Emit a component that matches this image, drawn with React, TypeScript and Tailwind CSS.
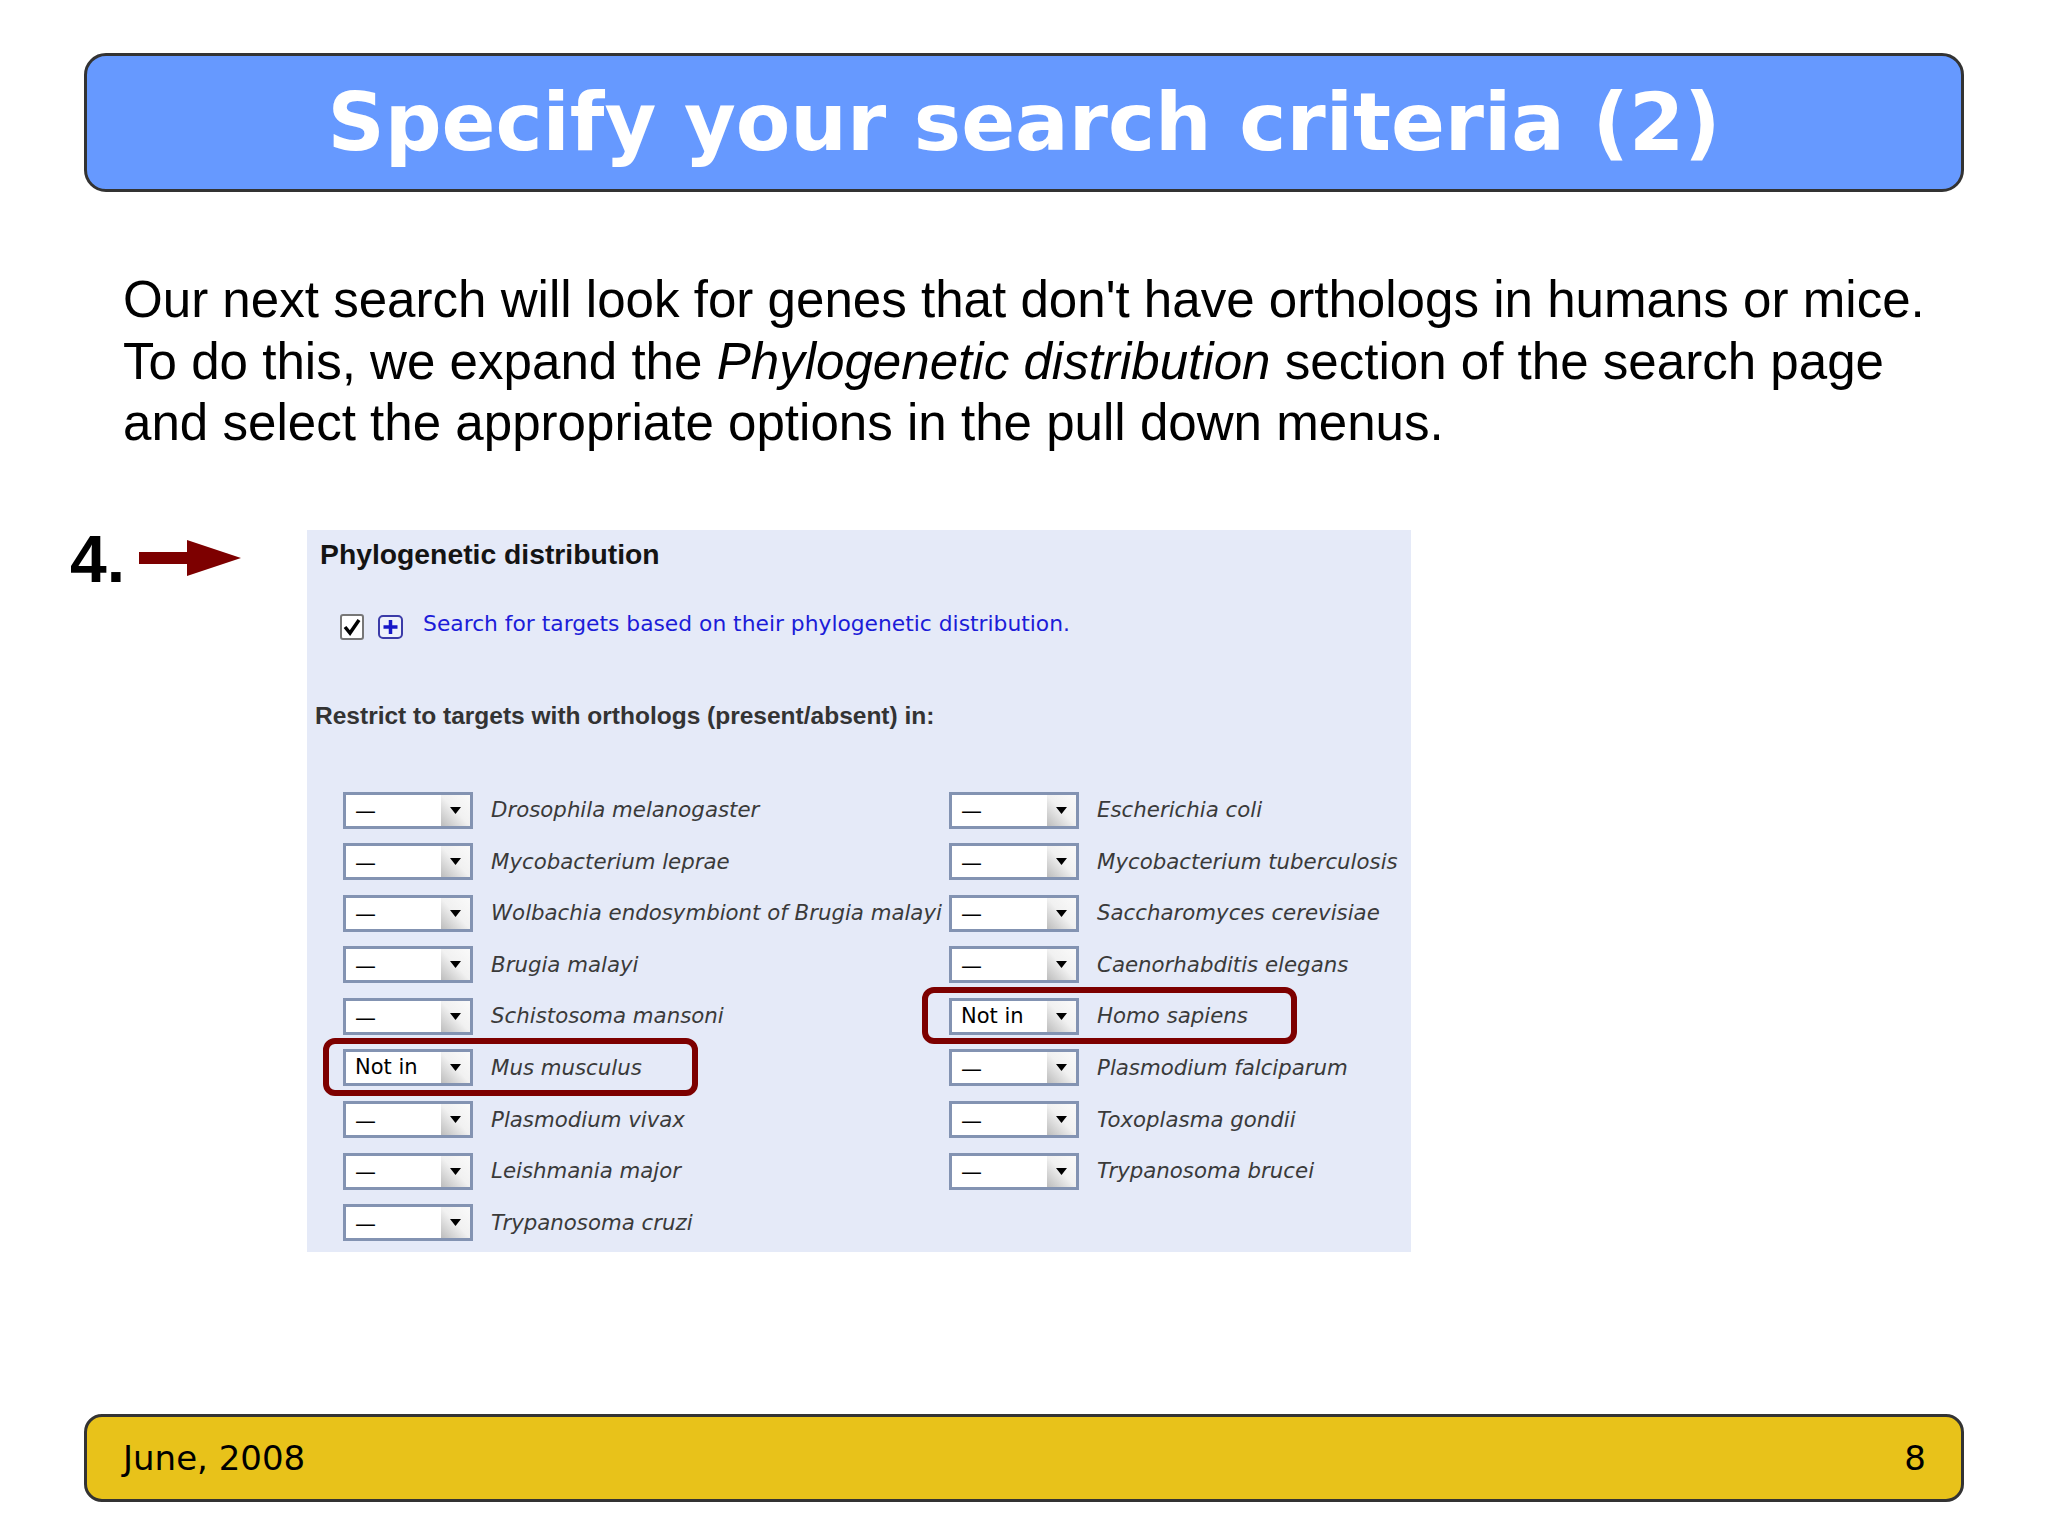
import React from "react";

interface Organism {
  name: string;
  notIn?: boolean;
  boxLeft?: string;
}

const LEFT_COL: Organism[] = [
  { name: "Drosophila melanogaster" },
  { name: "Mycobacterium leprae" },
  { name: "Wolbachia endosymbiont of Brugia malayi" },
  { name: "Brugia malayi" },
  { name: "Schistosoma mansoni" },
  { name: "Mus musculus", notIn: true, boxLeft: "left" },
  { name: "Plasmodium vivax" },
  { name: "Leishmania major" },
  { name: "Trypanosoma cruzi" },
];

const RIGHT_COL: Organism[] = [
  { name: "Escherichia coli" },
  { name: "Mycobacterium tuberculosis" },
  { name: "Saccharomyces cerevisiae" },
  { name: "Caenorhabditis elegans" },
  { name: "Homo sapiens", notIn: true, boxLeft: "right" },
  { name: "Plasmodium falciparum" },
  { name: "Toxoplasma gondii" },
  { name: "Trypanosoma brucei" },
];

function Select({ notIn }: { notIn?: boolean }) {
  return (
    <div className="flex h-[37px] w-[130px] shrink-0 border-[3px] border-[#8393b2] bg-white">
      <div
        className="flex flex-1 items-center pl-[9px] text-[21px] text-black"
        style={{ fontFamily: '"DejaVu Sans", sans-serif' }}
      >
        {notIn ? "Not in" : <span className="mt-[4px]">—</span>}
      </div>
      <div className="flex w-[29px] items-center justify-center bg-gradient-to-tr from-[#bdbdbd] via-[#f1f1f1] to-[#fafafa]">
        <svg width="11" height="7" viewBox="0 0 11 7">
          <polygon points="0,0 11,0 5.5,7" fill="#000" />
        </svg>
      </div>
    </div>
  );
}

function OrganismRow({ item }: { item: Organism }) {
  return (
    <div className="relative flex h-[37px] items-center">
      {item.boxLeft && (
        <div
          className={
            item.boxLeft === "left"
              ? "absolute left-[-20px] top-[-11px] h-[58px] w-[375px] rounded-[12px] border-[6px] border-[#7d0000]"
              : "absolute left-[-27px] top-[-11px] h-[57px] w-[375px] rounded-[12px] border-[6px] border-[#7d0000]"
          }
        />
      )}
      <Select notIn={item.notIn} />
      <span
        className="ml-[18px] whitespace-nowrap text-[21.3px] italic text-[#3a3a3a]"
        style={{ fontFamily: '"DejaVu Sans", sans-serif' }}
      >
        {item.name}
      </span>
    </div>
  );
}

export default function App() {
  return (
    <div
      className="flex h-[1536px] w-[2048px] flex-col overflow-hidden bg-white"
      style={{ fontFamily: '"Liberation Sans", Arial, sans-serif' }}
    >
      {/* Title bar */}
      <div className="mx-[84px] mt-[53px] flex h-[139px] items-center justify-center rounded-[22px] border-[3px] border-[#333333] bg-[#6699ff]">
        <h1
          className="text-[79.5px] font-bold leading-none text-white"
          style={{ fontFamily: '"DejaVu Sans", sans-serif' }}
        >
          Specify your search criteria (2)
        </h1>
      </div>

      {/* Intro text */}
      <p className="ml-[123px] mt-[77px] text-[51.1px] leading-[61.5px] text-black">
        Our next search will look for genes that don't have orthologs in humans or mice.
        <br />
        To do this, we expand the <i>Phylogenetic distribution</i> section of the search page
        <br />
        and select the appropriate options in the pull down menus.
      </p>

      {/* Step 4 */}
      <div className="mt-[72px] flex items-start">
        <span className="ml-[70px] text-[66px] font-bold leading-none text-black">4.</span>
        <svg className="ml-[14px] mt-[14px]" width="102" height="36" viewBox="0 0 102 36">
          <rect x="0" y="12" width="50" height="12" fill="#7d0000" />
          <polygon points="48,0 102,18 48,36" fill="#7d0000" />
        </svg>

        {/* Screenshot panel */}
        <div className="ml-[66px] mt-[4px] h-[722px] w-[1104px] bg-[#e5eaf8]">
          <div className="pl-[13px] pt-[8px] text-[28.3px] font-bold leading-[32px] text-[#141414]">
            Phylogenetic distribution
          </div>

          <div className="mt-[44px] flex h-[26px] items-center pl-[33px]">
            <svg width="24" height="26" viewBox="0 0 24 26">
              <rect x="1" y="1" width="22" height="24" rx="2" fill="#fff" stroke="#777" strokeWidth="2" />
              <path d="M5 13 L10 19 L19 6" fill="none" stroke="#000" strokeWidth="3.5" />
            </svg>
            <svg className="ml-[14px]" width="25" height="24" viewBox="0 0 25 24">
              <rect x="1" y="1" width="23" height="22" rx="4" fill="#eef1fb" stroke="#3b3ba8" strokeWidth="2" />
              <path d="M12.5 5 V19 M5.5 12 H19.5" stroke="#1818c8" strokeWidth="3.5" />
            </svg>
            <span
              className="mb-[4px] ml-[20px] text-[21.8px] text-[#1c1cd8]"
              style={{ fontFamily: '"DejaVu Sans", sans-serif' }}
            >
              Search for targets based on their phylogenetic distribution.
            </span>
          </div>

          <div className="mt-[62px] pl-[8px] text-[24.5px] font-bold leading-[28px] text-[#333333]">
            Restrict to targets with orthologs (present/absent) in:
          </div>

          <div className="mt-[62px] grid grid-cols-[606px_1fr] gap-y-[14.6px] pl-[36px]">
            {LEFT_COL.map((left, i) => (
              <React.Fragment key={left.name}>
                <OrganismRow item={left} />
                {RIGHT_COL[i] ? <OrganismRow item={RIGHT_COL[i]} /> : <div />}
              </React.Fragment>
            ))}
          </div>
        </div>
      </div>

      {/* Footer */}
      <div
        className="mx-[84px] mb-[34px] mt-auto flex h-[88px] items-center justify-between rounded-[18px] border-[3px] border-[#333333] bg-[#e8c21a] pl-[36px] pr-[35px] text-[34px] text-black"
        style={{ fontFamily: '"DejaVu Sans", sans-serif' }}
      >
        <span>June, 2008</span>
        <span>8</span>
      </div>
    </div>
  );
}
